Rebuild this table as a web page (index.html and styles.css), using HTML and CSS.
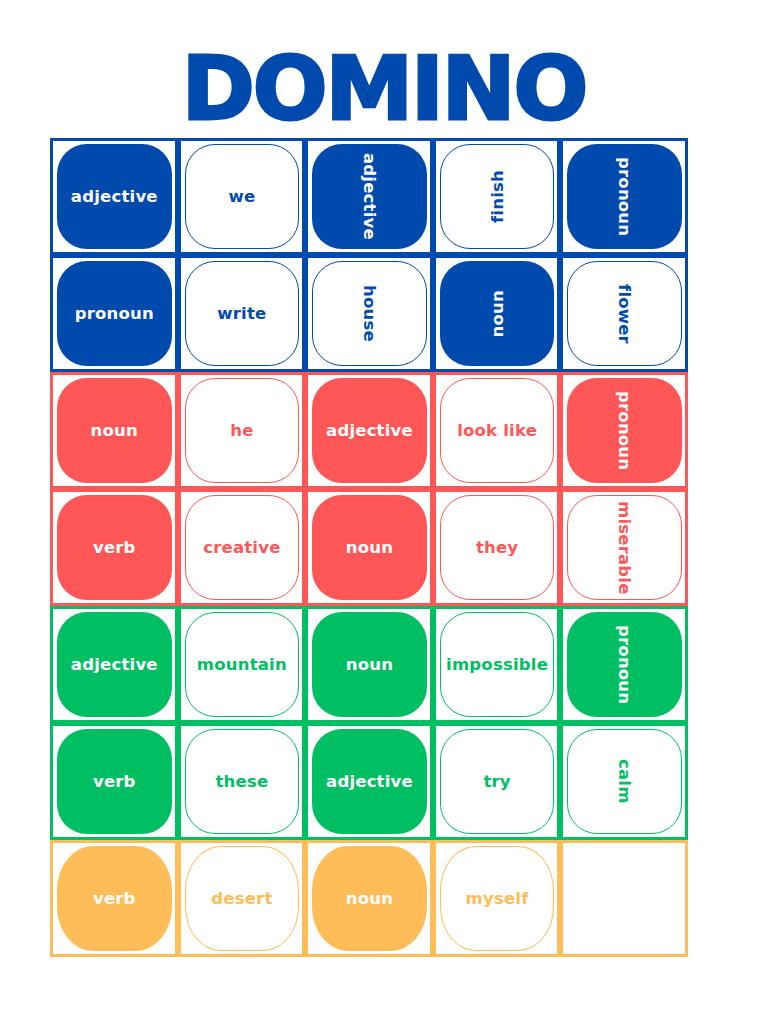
FILE: index.html
```html
<!DOCTYPE html>
<html lang="en">
<head>
<meta charset="utf-8">
<title>Domino</title>
<link rel="stylesheet" href="styles.css">
</head>
<body>
<h1 class="title">DOMINO</h1>
<div class="board">
  <div class="cell blue"><div class="tile fill"><span>adjective</span></div></div>
  <div class="cell blue"><div class="tile line"><span>we</span></div></div>
  <div class="cell blue"><div class="tile fill"><span class="cw">adjective</span></div></div>
  <div class="cell blue"><div class="tile line"><span class="ccw">finish</span></div></div>
  <div class="cell blue"><div class="tile fill"><span class="cw">pronoun</span></div></div>

  <div class="cell blue"><div class="tile fill"><span>pronoun</span></div></div>
  <div class="cell blue"><div class="tile line"><span>write</span></div></div>
  <div class="cell blue"><div class="tile line"><span class="cw">house</span></div></div>
  <div class="cell blue"><div class="tile fill"><span class="ccw">noun</span></div></div>
  <div class="cell blue"><div class="tile line"><span class="cw">flower</span></div></div>

  <div class="cell red"><div class="tile fill"><span>noun</span></div></div>
  <div class="cell red"><div class="tile line"><span>he</span></div></div>
  <div class="cell red"><div class="tile fill"><span>adjective</span></div></div>
  <div class="cell red"><div class="tile line"><span>look like</span></div></div>
  <div class="cell red"><div class="tile fill"><span class="cw">pronoun</span></div></div>

  <div class="cell red"><div class="tile fill"><span>verb</span></div></div>
  <div class="cell red"><div class="tile line"><span>creative</span></div></div>
  <div class="cell red"><div class="tile fill"><span>noun</span></div></div>
  <div class="cell red"><div class="tile line"><span>they</span></div></div>
  <div class="cell red"><div class="tile line"><span class="cw">miserable</span></div></div>

  <div class="cell green"><div class="tile fill"><span>adjective</span></div></div>
  <div class="cell green"><div class="tile line"><span>mountain</span></div></div>
  <div class="cell green"><div class="tile fill"><span>noun</span></div></div>
  <div class="cell green"><div class="tile line"><span>impossible</span></div></div>
  <div class="cell green"><div class="tile fill"><span class="cw">pronoun</span></div></div>

  <div class="cell green"><div class="tile fill"><span>verb</span></div></div>
  <div class="cell green"><div class="tile line"><span>these</span></div></div>
  <div class="cell green"><div class="tile fill"><span>adjective</span></div></div>
  <div class="cell green"><div class="tile line"><span>try</span></div></div>
  <div class="cell green"><div class="tile line"><span class="cw">calm</span></div></div>

  <div class="cell yellow"><div class="tile fill pill"><span>verb</span></div></div>
  <div class="cell yellow"><div class="tile line pill"><span>desert</span></div></div>
  <div class="cell yellow"><div class="tile fill pill"><span>noun</span></div></div>
  <div class="cell yellow"><div class="tile line pill"><span>myself</span></div></div>
  <div class="cell yellow"></div>
</div>
</body>
</html>
```

FILE: styles.css
```css
* { box-sizing: border-box; }

body {
  margin: 0;
  background: #ffffff;
  font-family: "DejaVu Sans", "Liberation Sans", sans-serif;
}

.title {
  margin: 0;
  padding-top: 45px;
  height: 138px;
  text-align: center;
  font-family: "DejaVu Sans", sans-serif;
  font-weight: bold;
  font-size: 88px;
  line-height: 88px;
  letter-spacing: -2px;
  color: #004aad;
  -webkit-text-stroke: 3px #004aad;
}

.board {
  width: 638px;
  margin-left: 50px;
  display: grid;
  grid-template-columns: repeat(5, 1fr);
  grid-auto-rows: 117px;
}

.cell {
  border: 3px solid var(--c);
  padding: 3px 3px 3px 4px;
  display: flex;
}

.blue { --c: #004aad; }
.red { --c: #ff5757; }
.green { --c: #00bf63; }
.yellow { --c: #ffbd59; }

.tile {
  flex: 1;
  border-radius: 30px;
  display: flex;
  align-items: center;
  justify-content: center;
  font-weight: bold;
  font-size: 16.5px;
  letter-spacing: 0.2px;
}

.tile.pill { border-radius: 36px / 44px; }

.fill {
  background: var(--c);
  color: #ffffff;
}

.line {
  background: #ffffff;
  border: 1px solid var(--c);
  color: var(--c);
}

.cw { writing-mode: vertical-rl; }

.ccw {
  writing-mode: vertical-rl;
  transform: rotate(180deg);
}
```
